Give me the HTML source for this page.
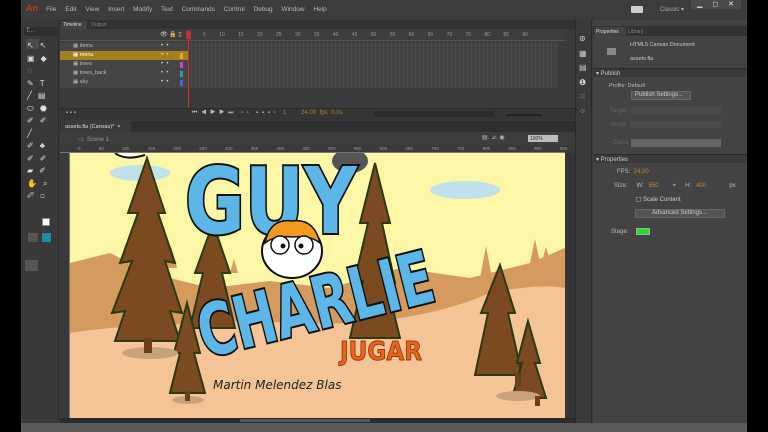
<!DOCTYPE html>
<html><head><meta charset="utf-8"><style>
*{margin:0;padding:0;box-sizing:border-box}
body{width:768px;height:432px;overflow:hidden;background:#000;font-family:"Liberation Sans",sans-serif;font-size:6px;color:#bbb;position:relative}
.a{position:absolute}
.t{position:absolute;white-space:nowrap}
</style></head><body>
<div class="a" style="left:21px;top:0;width:726px;height:432px;background:#3a3a3a"></div>
<div class="a" style="left:21px;top:0;width:726px;height:19px;background:#3c3c3c"></div>
<div class="t" style="left:26px;top:3px;color:#c0392b;font-size:9px;font-weight:bold">An</div>
<div class="t" style="left:46px;top:6px;font-size:6.5px;color:#b8b8b8;word-spacing:7px">File Edit View Insert Modify Text Commands Control Debug Window Help</div>
<div class="a" style="left:631px;top:6px;width:12px;height:7px;background:#ccc;border-radius:1px"></div>
<div class="t" style="left:660px;top:6px;color:#aaa">Classic ▾</div>
<div class="a" style="left:691px;top:0;width:50px;height:9px;background:#4a4a4a"></div>
<div class="t" style="left:697px;top:0;color:#eee;font-size:7px;word-spacing:8px">▁ ◻ ✕</div>
<div class="a" style="left:22px;top:20px;width:37px;height:400px;background:#393939;border-right:1px solid #2a2a2a"></div>
<div class="a" style="left:24px;top:27px;width:33px;height:9px;background:#2f2f2f"></div>
<div class="t" style="left:26px;top:28px;color:#aaa">T...</div>
<div class="a" style="left:26px;top:39px;width:13px;height:10px;background:#4b4b4b"></div>
<div class="t" style="left:27px;top:40px;font-size:8px;color:#ddd;line-height:12.5px;width:30px;white-space:normal;letter-spacing:6px">↖↖ ▣◆ ◌ ✎T ╱▤ ⬭⬣ ✐✐ ╱ ✐♣ ✐✐ ▰✐ ✋⌕ ✐◻</div>
<div class="a" style="left:42px;top:218px;width:8px;height:8px;background:#fff;border:1px solid #888"></div>
<div class="a" style="left:42px;top:233px;width:9px;height:9px;background:#1d8aa6"></div>
<div class="a" style="left:28px;top:233px;width:10px;height:9px;background:#555"></div>
<div class="a" style="left:25px;top:260px;width:13px;height:11px;background:#555"></div>
<div class="a" style="left:60px;top:20px;width:515px;height:100px;background:#3b3b3b"></div>
<div class="a" style="left:60px;top:20px;width:515px;height:9px;background:#323232"></div>
<div class="a" style="left:61px;top:21px;width:26px;height:8px;background:#434343"></div>
<div class="t" style="left:63px;top:22px;font-size:5px;color:#ddd">Timeline</div>
<div class="t" style="left:91px;top:22px;font-size:5px;color:#888">Output</div>
<div class="a" style="left:60px;top:29px;width:505px;height:12px;background:#3d3d3d;border-bottom:1px solid #555"></div>
<div class="t" style="left:160px;top:31px;color:#ccc">👁 🔒 ▯</div>
<div class="t" style="left:203px;top:32px;color:#999;font-size:5px;word-spacing:12px">5 10 15 20 25 30 35 40 45 50 55 60 65 70 75 80 85 90</div>
<div class="a" style="left:60px;top:42px;width:128px;height:46px;background:#454545"></div>
<div class="a" style="left:60px;top:51px;width:128px;height:9px;background:#a5801e"></div>
<div class="t" style="left:73px;top:42px;line-height:9px;font-size:5.5px;color:#bbb">▦ items<br><span style="color:#fff">▦ menu</span><br>▦ trees<br>▦ trees_back<br>▦ sky</div>
<div class="t" style="left:161px;top:42px;line-height:9px;color:#ccc">•&nbsp;&nbsp;•<br>•&nbsp;&nbsp;•<br>•&nbsp;&nbsp;•<br>•&nbsp;&nbsp;•<br>•&nbsp;&nbsp;•</div>
<div class="a" style="left:180px;top:53px;width:3px;height:6px;background:#f0a020"></div>
<div class="a" style="left:180px;top:62px;width:3px;height:6px;background:#d040d0"></div>
<div class="a" style="left:180px;top:71px;width:3px;height:6px;background:#20a0a0"></div>
<div class="a" style="left:180px;top:80px;width:3px;height:6px;background:#5060e0"></div>
<div class="a" style="left:188px;top:42px;width:370px;height:46px;background:repeating-linear-gradient(90deg,#414141 0 3px,#4a4a4a 3px 4px);"></div>
<div class="a" style="left:188px;top:30px;width:1px;height:78px;background:#d03030"></div>
<div class="a" style="left:186px;top:31px;width:5px;height:8px;background:#c03030"></div>
<div class="a" style="left:60px;top:108px;width:515px;height:12px;background:#353535;border-top:1px solid #2a2a2a"></div>
<div class="t" style="left:66px;top:110px;color:#aaa">▪ ▪ ▪</div>
<div class="t" style="left:192px;top:110px;color:#bbb;word-spacing:2px">⏮ ◀ ▶ ▶ ⏭ &nbsp;▫ ▫ &nbsp;▪ ▪ ▪ ▫ &nbsp;<span style="color:#b08030">1 &nbsp;&nbsp;&nbsp;24.00 fps 0.0s</span></div>
<div class="a" style="left:374px;top:111px;width:120px;height:6px;background:#2c2c2c"></div>
<div class="a" style="left:506px;top:114px;width:36px;height:2px;background:#222"></div>
<div class="a" style="left:60px;top:121px;width:515px;height:11px;background:#2f2f2f"></div>
<div class="a" style="left:61px;top:121px;width:70px;height:11px;background:#3a3a3a"></div>
<div class="t" style="left:65px;top:124px;font-size:5.5px;color:#ddd">assets.fla (Canvas)* &nbsp;×</div>
<div class="a" style="left:60px;top:132px;width:515px;height:13px;background:#3d3d3d"></div>
<div class="t" style="left:78px;top:136px;color:#999">▭ &nbsp;Scene 1</div>
<div class="t" style="left:482px;top:134px;color:#bbb">▤. ⊿. ◉</div>
<div class="a" style="left:528px;top:135px;width:30px;height:7px;background:#bbb"></div>
<div class="t" style="left:530px;top:136px;color:#333;font-size:5px">100%</div>
<div class="a" style="left:60px;top:145px;width:505px;height:8px;background:#3a3a3a;border-bottom:1px solid #777"></div>
<div class="t" style="left:78px;top:146px;color:#999;font-size:4.5px;word-spacing:17px">0 50 100 150 200 250 300 350 400 450 500 550 600 650 700 750 800 850 900 950</div>
<div class="a" style="left:60px;top:153px;width:10px;height:267px;background:#3a3a3a;border-right:1px solid #777"></div>
<svg class="a" style="left:70px;top:153px" width="495" height="266" viewBox="0 0 495 266">
<rect width="495" height="266" fill="#fbf7a6"/>
<ellipse cx="395" cy="37" rx="35" ry="9" fill="#c0e0ea"/>
<ellipse cx="70" cy="20" rx="30" ry="8" fill="#c0e0ea"/>
<ellipse cx="215" cy="80" rx="25" ry="5" fill="#c0e0ea"/>
<path d="M0 110 L40 100 L80 120 L140 135 L200 128 L260 135 L330 115 L400 125 L460 110 L495 95 L495 266 L0 266Z" fill="#d59a5e"/>
<path d="M95 115 l6 -22 l6 22Z M145 115 l5 -20 l5 20Z M160 120 l4 -14 l4 14Z M410 125 l6 -32 l6 32Z M460 110 l5 -24 l5 24Z M472 108 l4 -14 l4 14Z" fill="#d59a5e"/>
<path d="M0 200 Q80 160 220 170 Q340 175 420 140 Q470 130 495 135 L495 266 L0 266Z" fill="#f5c496"/>
<path d="M0 180 Q60 170 120 175 L120 266 L0 266Z" fill="#f5c496"/>
<g fill="#7c4a20" stroke="#2b3a10" stroke-width="2">
<path d="M77 5 L95 60 L88 60 L105 110 L95 108 L112 160 L100 158 L110 188 L45 188 L55 158 L42 160 L62 108 L50 110 L68 60 L58 60Z"/>
<path d="M143 70 L160 120 L152 120 L165 175 L120 175 L133 120 L125 120Z"/>
<path d="M305 10 L320 70 L312 70 L325 130 L316 128 L330 185 L280 185 L293 128 L284 130 L298 70 L290 70Z"/>
<path d="M117 150 L130 200 L124 200 L135 240 L100 240 L110 200 L104 200Z"/>
<path d="M430 112 L445 160 L438 160 L452 222 L405 222 L418 160 L411 160Z"/>
<path d="M458 168 L470 210 L465 210 L476 245 L442 245 L452 210 L447 210Z"/>
</g>
<g fill="#c9a27a"><ellipse cx="80" cy="200" rx="28" ry="6"/><ellipse cx="448" cy="243" rx="22" ry="5"/><ellipse cx="118" cy="247" rx="16" ry="4"/></g>
<rect x="74" y="185" width="8" height="15" fill="#6b3f1a"/><rect x="445" y="220" width="6" height="14" fill="#6b3f1a"/><rect x="465" y="243" width="5" height="10" fill="#6b3f1a"/><rect x="115" y="238" width="5" height="10" fill="#6b3f1a"/>
<ellipse cx="280" cy="8" rx="18" ry="12" fill="#555"/>
<path d="M45 0 q10 8 30 2" fill="#fff" stroke="#111" stroke-width="2"/>
<text x="115" y="80" textLength="172" lengthAdjust="spacingAndGlyphs" font-family="DejaVu Sans" font-weight="bold" font-size="92" fill="#5cb6e8" stroke="#111" stroke-width="4" paint-order="stroke">GUY</text>
<text x="135" y="205" textLength="240" lengthAdjust="spacingAndGlyphs" font-family="DejaVu Sans" font-weight="bold" font-size="72" fill="#5cb6e8" stroke="#111" stroke-width="4" paint-order="stroke" transform="rotate(-14 135 205)">CHARLIE</text>
<ellipse cx="222" cy="98" rx="30" ry="27" fill="#fff" stroke="#111" stroke-width="2"/>
<path d="M195 90 q5 -25 27 -22 q22 -3 28 22 q-10 -8 -27 -6 q-18 -2 -28 6Z" fill="#f29a1f" stroke="#111" stroke-width="1.5"/>
<circle cx="210" cy="92" r="9" fill="#fff" stroke="#111" stroke-width="1.5"/><circle cx="234" cy="92" r="9" fill="#fff" stroke="#111" stroke-width="1.5"/>
<circle cx="213" cy="93" r="2.5" fill="#111"/><circle cx="231" cy="93" r="2.5" fill="#111"/>
<text x="270" y="207" textLength="82" lengthAdjust="spacingAndGlyphs" font-family="DejaVu Sans" font-weight="bold" font-size="26" fill="#e8641c" stroke="#a03a10" stroke-width="1">JUGAR</text>
<text x="143" y="236" font-family="DejaVu Sans" font-style="italic" font-size="12" fill="#222">Martin Melendez Blas</text>
</svg>
<div class="a" style="left:565px;top:153px;width:10px;height:267px;background:#353535"></div>
<div class="a" style="left:60px;top:418px;width:515px;height:5px;background:#2c2c2c"></div>
<div class="a" style="left:240px;top:419px;width:130px;height:3px;background:#555"></div>
<div class="a" style="left:21px;top:423px;width:726px;height:9px;background:#5a5a5a"></div>
<div class="a" style="left:575px;top:20px;width:17px;height:403px;background:#3a3a3a;border-left:1px solid #2a2a2a;border-right:1px solid #2a2a2a"></div>
<div class="t" style="left:579px;top:32px;color:#ccc;font-size:8px;line-height:14.5px">⊛<br>▦<br>▤<br>❶<br>⁙<br>⁘</div>
<div class="a" style="left:593px;top:20px;width:154px;height:403px;background:#434343"></div>
<div class="a" style="left:593px;top:26px;width:154px;height:10px;background:#333"></div>
<div class="a" style="left:594px;top:27px;width:32px;height:9px;background:#434343"></div>
<div class="t" style="left:596px;top:29px;font-size:5px;color:#ddd">Properties</div>
<div class="t" style="left:628px;top:29px;font-size:5px;color:#888">Library</div>
<div class="a" style="left:607px;top:48px;width:9px;height:7px;background:#888"></div>
<div class="t" style="left:630px;top:42px;font-size:5.5px;color:#ccc">HTML5 Canvas Document</div>
<div class="t" style="left:630px;top:56px;font-size:5.5px;color:#ccc">assets.fla</div>
<div class="a" style="left:593px;top:68px;width:154px;height:9px;background:#3a3a3a;border-top:1px solid #2c2c2c"></div>
<div class="t" style="left:596px;top:70px;color:#ccc">▾ Publish</div>
<div class="t" style="left:609px;top:83px;color:#bbb;font-size:5.5px">Profile: Default</div>
<div class="a" style="left:631px;top:91px;width:60px;height:9px;background:#555;border:1px solid #666"></div>
<div class="t" style="left:635px;top:92px;color:#ccc">Publish Settings...</div>
<div class="t" style="left:610px;top:108px;color:#666">Target:</div><div class="a" style="left:630px;top:107px;width:91px;height:7px;background:#4a4a4a"></div>
<div class="t" style="left:611px;top:122px;color:#666">Script:</div><div class="a" style="left:630px;top:121px;width:91px;height:7px;background:#4a4a4a"></div>
<div class="t" style="left:613px;top:140px;color:#666">Class:</div><div class="a" style="left:631px;top:139px;width:90px;height:8px;background:#666"></div>
<div class="a" style="left:593px;top:154px;width:154px;height:9px;background:#3a3a3a;border-top:1px solid #2c2c2c"></div>
<div class="t" style="left:596px;top:156px;color:#ccc">▾ Properties</div>
<div class="t" style="left:617px;top:169px;color:#bbb">FPS: <span style="color:#c98a1e">&nbsp;24.00</span></div>
<div class="t" style="left:614px;top:183px;color:#bbb;word-spacing:3px">Size: &nbsp;W: <span style="color:#c98a1e">550</span> &nbsp;&nbsp;⌖ &nbsp;H: <span style="color:#c98a1e">400</span> &nbsp;&nbsp;&nbsp;&nbsp;px</div>
<div class="a" style="left:636px;top:197px;width:5px;height:5px;border:1px solid #777"></div>
<div class="t" style="left:643px;top:197px;color:#ccc">Scale Content</div>
<div class="a" style="left:635px;top:209px;width:90px;height:9px;background:#555;border:1px solid #666"></div>
<div class="t" style="left:652px;top:210px;color:#ccc">Advanced Settings...</div>
<div class="t" style="left:611px;top:229px;color:#bbb">Stage:</div>
<div class="a" style="left:636px;top:228px;width:14px;height:7px;background:#22e020;border:1px solid #aaa"></div>
</body></html>
